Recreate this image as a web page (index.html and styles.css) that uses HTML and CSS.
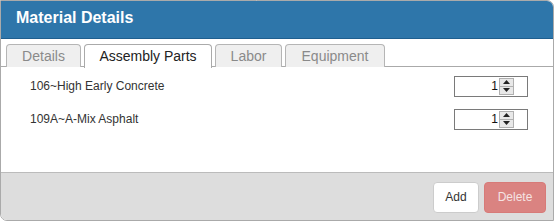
FILE: index.html
```html
<!DOCTYPE html>
<html>
<head>
<meta charset="utf-8">
<link rel="stylesheet" href="styles.css">
</head>
<body>
<div class="dialog">
  <div class="header">Material Details</div>
  <div class="tabs">
    <div class="tab tab-details">Details</div>
    <div class="tab tab-active tab-assembly">Assembly Parts</div>
    <div class="tab tab-labor">Labor</div>
    <div class="tab tab-equip">Equipment</div>
  </div>
  <div class="content">
    <div class="row">
      <span class="label">106~High Early Concrete</span>
      <div class="num"><span class="val">1</span><div class="spin"><div class="up"><svg width="7" height="4" viewBox="0 0 7 4"><path d="M0 4 L3.5 0 L7 4 Z" fill="#222"/></svg></div><div class="down"><svg width="7" height="4" viewBox="0 0 7 4"><path d="M0 0 L3.5 4 L7 0 Z" fill="#222"/></svg></div></div></div>
    </div>
    <div class="row">
      <span class="label">109A~A-Mix Asphalt</span>
      <div class="num"><span class="val">1</span><div class="spin"><div class="up"><svg width="7" height="4" viewBox="0 0 7 4"><path d="M0 4 L3.5 0 L7 4 Z" fill="#222"/></svg></div><div class="down"><svg width="7" height="4" viewBox="0 0 7 4"><path d="M0 0 L3.5 4 L7 0 Z" fill="#222"/></svg></div></div></div>
    </div>
  </div>
  <div class="footer">
    <button class="btn btn-add">Add</button>
    <button class="btn btn-delete">Delete</button>
  </div>
</div>
</body>
</html>
```
FILE: styles.css
```css
html, body {
  margin: 0;
  padding: 0;
  background: #ffffff;
}
body {
  font-family: "Liberation Sans", Arial, sans-serif;
}
.dialog {
  width: 552px;
  height: 219px;
  border: 1px solid #aaaaaa;
  border-radius: 0 7px 0 7px;
  overflow: hidden;
  display: flex;
  flex-direction: column;
  background: #fff;
}
.header {
  background: #2e76aa;
  color: #fff;
  font-weight: bold;
  font-size: 16px;
  line-height: 34px;
  padding-left: 15px;
  border-bottom: 1px solid #1f5f8f;
  box-sizing: border-box;
  height: 38px;
}
.tabs {
  display: flex;
  gap: 3px;
  padding: 5px 0 0 5px;
  border-bottom: 1px solid #aaaaaa;
  height: 28px;
  box-sizing: border-box;
}
.tab {
  height: 23px;
  box-sizing: border-box;
  border: 1px solid #b5b5b5;
  border-bottom: none;
  border-radius: 4px 4px 0 0;
  background: #efefef;
  color: #8a8a8a;
  font-size: 14px;
  line-height: 22px;
  text-align: center;
}
.tab-active {
  background: #fff;
  color: #222;
  height: 24px;
  margin-bottom: -1px;
  border-color: #aaaaaa;
}
.tab-details { width: 75px; }
.tab-assembly { width: 128px; }
.tab-labor { width: 67px; }
.tab-equip { width: 100px; }
.content {
  flex: 1;
  padding: 9px 25px 0 29px;
  display: flex;
  flex-direction: column;
  gap: 13px;
}
.row {
  display: flex;
  justify-content: space-between;
  align-items: center;
  height: 20px;
}
.label {
  font-size: 12px;
  color: #333;
}
.num {
  width: 74px;
  height: 21px;
  box-sizing: border-box;
  border: 1px solid #7a7a7a;
  display: flex;
  justify-content: flex-end;
  align-items: center;
  padding-right: 13px;
  font-size: 12px;
  color: #111;
}
.val {
  margin-right: 1px;
}
.spin {
  width: 15px;
  height: 17px;
  display: flex;
  flex-direction: column;
}
.up, .down {
  flex: 1;
  background: #e8e8e8;
  border: 1px solid #b0b0b0;
  display: flex;
  align-items: center;
  justify-content: center;
}
.up { border-bottom-width: 0; }
.footer {
  height: 47px;
  background: #dddddd;
  border-top: 1px solid #bbbbbb;
  display: flex;
  justify-content: flex-end;
  align-items: center;
  gap: 5px;
  padding-right: 7px;
}
.btn {
  font-family: "Liberation Sans", Arial, sans-serif;
  font-size: 12px;
  height: 31px;
  border-radius: 4px;
  padding: 0;
  margin-top: 1px;
}
.btn-add {
  width: 46px;
  background: #fff;
  color: #333;
  border: 1px solid #cccccc;
}
.btn-delete {
  width: 62px;
  background: #da8381;
  color: #f5e3e3;
  border: 1px solid #d77a78;
}
```
